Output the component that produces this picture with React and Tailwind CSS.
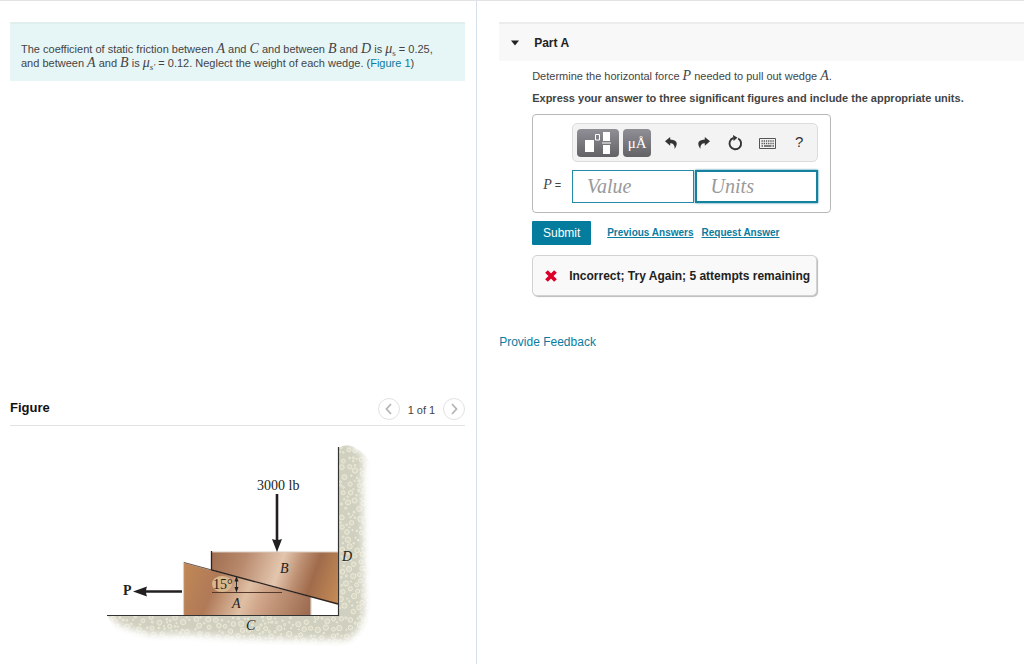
import React from "react";

const M = ({ children }) => (
  <i className="font-['Liberation_Serif',serif] text-[14px] leading-[0]">{children}</i>
);

const Sub = ({ children }) => (
  <span className="align-[-3px] font-['Liberation_Serif',serif] text-[9px] leading-[0]">{children}</span>
);

function makePebbles() {
  let seed = 11;
  const rand = () => {
    seed = (seed * 16807) % 2147483647;
    return seed / 2147483647;
  };
  const list = [];
  const add = (x0, y0, w, h, tries, min, max) => {
    for (let i = 0; i < tries; i++) {
      const r = min + rand() * (max - min);
      const x = x0 + rand() * w;
      const y = y0 + rand() * h;
      if (list.every((p) => Math.hypot(p.x - x, p.y - y) > p.r + r + 1.3)) list.push({ x, y, r });
    }
  };
  add(108, 617, 262, 30, 240, 1.9, 2.7);
  add(340, 445, 30, 172, 190, 1.9, 2.7);
  add(108, 617, 262, 30, 600, 0.6, 1.2);
  add(340, 445, 30, 172, 450, 0.6, 1.2);
  return list;
}
const pebbles = makePebbles();

function WedgeDiagram() {
  return (
    <svg viewBox="100 440 280 210" className="ml-[90px] block h-[210px] w-[280px] font-['Liberation_Serif',serif]" role="img" aria-label="Wedges A and B between floor C and wall D">
      <defs>
        <linearGradient id="wedgeA" gradientUnits="userSpaceOnUse" x1="183" y1="575" x2="305" y2="625">
          <stop offset="0" stopColor="#c08655" />
          <stop offset="0.25" stopColor="#b07a58" />
          <stop offset="0.5" stopColor="#dfbfa4" />
          <stop offset="0.62" stopColor="#cfa488" />
          <stop offset="1" stopColor="#9c6a4e" />
        </linearGradient>
        <linearGradient id="wedgeB" gradientUnits="userSpaceOnUse" x1="212" y1="550" x2="338" y2="595">
          <stop offset="0" stopColor="#a06d50" />
          <stop offset="0.25" stopColor="#b98a6d" />
          <stop offset="0.52" stopColor="#e3c6ae" />
          <stop offset="0.66" stopColor="#bd8f72" />
          <stop offset="0.78" stopColor="#a06b4b" />
          <stop offset="1" stopColor="#c38a55" />
        </linearGradient>
        <filter id="soft" x="-20%" y="-20%" width="140%" height="140%">
          <feGaussianBlur stdDeviation="3.5" />
        </filter>
        <mask id="fade" maskUnits="userSpaceOnUse" x="100" y="440" width="280" height="210">
          <path d="M100 610H334V436Q352 442 364 458L362 480L363 520L364 600Q366 630 346 640L250 638L190 634L150 634L122 626Z" fill="#fff" filter="url(#soft)" />
        </mask>
        <clipPath id="solid">
          <path d="M107 615H338V448Q348 442 357 449Q368 454 371 466L370 600Q372 644 340 646L120 642Z" />
        </clipPath>
      </defs>
      <g clipPath="url(#solid)">
        <g mask="url(#fade)">
          <rect x="100" y="440" width="280" height="210" fill="#d0d0c0" />
          {pebbles.map((p, i) => (
            <circle key={i} cx={p.x} cy={p.y} r={p.r} fill="#d8d6c4" stroke="#efecd9" strokeWidth="0.9" />
          ))}
        </g>
      </g>
      <path d="M107 615.5H338.500V447" fill="none" stroke="#333" strokeWidth="1.2" />
      <path d="M183 562.500L311 597V615H183Z" fill="url(#wedgeA)" />
      <path d="M183.500 615V562.500L311 596.500V615" fill="none" stroke="#d8d2ca" strokeWidth="1.2" />
      <path d="M212 552H338V604L212 570Z" fill="url(#wedgeB)" />
      <path d="M212 552H338" stroke="#d9c9bb" strokeWidth="1.2" />
      <path d="M211.500 551V570L338 604" fill="none" stroke="#2d2420" strokeWidth="1.3" />
      <path d="M184 562.500L211 569.800" stroke="#50372a" strokeWidth="0.8" />
      <ellipse cx="222" cy="584" rx="10" ry="8" fill="#d9b78c" />
      <path d="M212 592.500H282" stroke="#55392a" strokeWidth="1" />
      <path d="M236.500 579V591" stroke="#222" strokeWidth="0.9" />
      <path d="M236.500 576L238.500 581.500H234.500ZM236.500 592.500L238.500 587H234.500Z" fill="#222" />
      <path d="M277 494V543" stroke="#231f20" strokeWidth="2.6" />
      <path d="M277 552L272 539Q277 541 282 539Z" fill="#231f20" />
      <path d="M182 591.500H145" stroke="#231f20" strokeWidth="2.6" />
      <path d="M133 591.500L147 586.500Q145 591.500 147 596.500Z" fill="#231f20" />
      <g fill="#231f20" fontSize="14">
        <text x="257" y="490">3000 lb</text>
        <text x="123" y="595" fontWeight="bold">P</text>
        <text x="213" y="589">15°</text>
        <g fontStyle="italic">
          <text x="280" y="573">B</text>
          <text x="232" y="608">A</text>
          <text x="246" y="630">C</text>
          <text x="342" y="561">D</text>
        </g>
      </g>
    </svg>
  );
}

function ToolButton({ label, children }) {
  return (
    <button type="button" aria-label={label} className="flex h-7 w-8 items-center justify-center text-[#333]">
      {children}
    </button>
  );
}

const Undo = ({ flip }) => (
  <svg viewBox="0 0 13 12" className={flip ? "h-3 w-[13px] -scale-x-100" : "h-3 w-[13px]"} fill="currentColor">
    <path d="M5.200 0L0 4.300L5.200 8.700V6.200Q9.800 6 9.700 12Q15.400 3.200 5.200 2.500Z" />
  </svg>
);

function Pager({ label, d }) {
  return (
    <button type="button" aria-label={label} className="flex h-[22px] w-[22px] items-center justify-center rounded-full border border-[#e2e2e2] bg-white">
      <svg viewBox="0 0 10 12" className="h-3 w-[10px]" fill="none" stroke="#b5b5b5" strokeWidth="1.8">
        <path d={d} />
      </svg>
    </button>
  );
}

export default function App() {
  return (
    <div className="grid min-h-screen grid-cols-[46.6%_minmax(0,1fr)] border-t border-[#e3e3e3] bg-white font-['Liberation_Sans',Arial,sans-serif] text-[12px] text-[#444]">
      <section className="flex flex-col border-r border-[#d5dfee] pt-[21px] pr-[11px] pl-[10px]">
        <div className="border-t-2 border-[#e1eeee] bg-[#e6f6f7] px-[11px] pt-[18px] pb-[11px] text-[11px]">
          <p className="leading-[14px]">
            The coefficient of static friction between <M>A</M> and <M>C</M> and between <M>B</M> and <M>D</M> is <M>μ</M><Sub>s</Sub> = 0.25,
            <br />
            and between <M>A</M> and <M>B</M> is <M>μ</M><Sub><i>s′</i></Sub> = 0.12. Neglect the weight of each wedge. (
            <a href="#figure" className="text-[#0a7c9f]">Figure 1</a>)
          </p>
        </div>
        <div id="figure" className="mt-auto pb-[14px]">
          <div className="flex items-center justify-between border-b border-[#e2e2e2] pb-[5px]">
            <h2 className="pb-[2px] text-[13px] leading-5 font-bold text-[#111]">Figure</h2>
            <div className="flex items-center gap-2 text-[11px]">
              <Pager label="Previous figure" d="M7 1L2.500 6L7 11" />
              <span className="pt-[3px]">1 of 1</span>
              <Pager label="Next figure" d="M3 1L7.500 6L3 11" />
            </div>
          </div>
          <div className="pt-[14px]">
            <WedgeDiagram />
          </div>
        </div>
      </section>

      <main className="pt-[21px] pl-[22px]">
        <h2 className="flex h-[39px] items-center gap-[15px] border-t-2 border-[#ececec] bg-[#f8f8f8] pl-3 font-bold text-[#222]">
          <svg viewBox="0 0 8 6" className="h-[6px] w-2" fill="#222">
            <path d="M0 0.500H8L4 5.500Z" />
          </svg>
          Part A
        </h2>
        <div className="pl-[33px]">
          <p className="mt-[6px] text-[11px] leading-[18px]">
            Determine the horizontal force <M>P</M> needed to pull out wedge <M>A</M>.
          </p>
          <p className="mt-[5px] text-[11px] leading-[16px] font-bold">Express your answer to three significant figures and include the appropriate units.</p>

          <div className="mt-[8px] w-[299px] rounded-[4px] border border-[#b8b8b8] pt-2 pr-3 pb-[9px] pl-[10px]">
            <div className="ml-[29px] flex h-[39px] items-center rounded-[5px] border border-[#dcdcdc] bg-[#f3f3f3] pl-1">
              <button type="button" aria-label="Templates" className="mr-1 flex h-7 w-[42px] items-center justify-center rounded-[4px] bg-gradient-to-b from-[#8f8f96] to-[#636366]">
                <svg viewBox="0 0 26 22" className="h-[22px] w-[26px]">
                  <path d="M0 8H9V20H0ZM18 0H25V9H18ZM18 13H25V22H18ZM17 10.500H26V11.500H17Z" fill="#fff" />
                  <path d="M10.500 2.500H14.500V8H10.500Z" fill="none" stroke="#fff" />
                </svg>
              </button>
              <button type="button" aria-label="Units" className="mr-1 h-7 w-7 rounded-[4px] bg-gradient-to-b from-[#8f8f96] to-[#636366] font-['Liberation_Serif',serif] text-[15px] leading-7 text-white">μÅ</button>
              <ToolButton label="Undo"><Undo /></ToolButton>
              <ToolButton label="Redo"><Undo flip /></ToolButton>
              <ToolButton label="Reset">
                <svg viewBox="0 0 16 16" className="h-4 w-4" fill="none" stroke="currentColor" strokeWidth="1.900">
                  <path d="M11.200 3.500A5.800 5.800 0 1 1 6.500 3" />
                  <path d="M6 0L10.500 2.700L6.500 6Z" fill="currentColor" stroke="none" />
                </svg>
              </ToolButton>
              <ToolButton label="Keyboard">
                <svg viewBox="0 0 17 11" className="mt-[2px] h-[11px] w-[17px]" fill="none" stroke="#555">
                  <path d="M0.500 0.500H16.500V10.500H0.500Z" />
                  <path d="M2.500 3H15M2.500 5.500H15" strokeWidth="1.400" strokeDasharray="1.300 0.900" />
                  <path d="M2.500 8H4M5 8H12.500M13.500 8H15" strokeWidth="1.300" />
                </svg>
              </ToolButton>
              <ToolButton label="Help"><span className="text-[15px]">?</span></ToolButton>
            </div>
            <div className="mt-2 flex items-center">
              <label htmlFor="value" className="w-[29px] pb-[3px] text-[11px]"><M>P</M> =</label>
              <input id="value" placeholder="Value" className="h-[33px] w-[122px] min-w-0 border border-[#2789a8] pl-[14px] font-['Liberation_Serif',serif] text-[20px] italic outline-none placeholder:text-[#999]" />
              <input aria-label="Units" placeholder="Units" className="ml-px h-[33px] w-[124px] min-w-0 border-2 border-[#16809f] pl-[14px] font-['Liberation_Serif',serif] text-[20px] italic shadow-[0_0_2px_#16809f] outline-none placeholder:text-[#999]" />
            </div>
          </div>

          <div className="mt-2 flex items-center">
            <button type="button" className="h-6 w-[59px] rounded-[1px] bg-[#047c9d] text-[12px] text-white">Submit</button>
            <a href="#previous" className="ml-4 pb-[2px] text-[10px] font-bold text-[#0a7c9f] underline">Previous Answers</a>
            <a href="#request" className="ml-2 pb-[2px] text-[10px] font-bold text-[#0a7c9f] underline">Request Answer</a>
          </div>

          <div role="status" className="mt-[10px] flex h-[41px] w-[285px] items-center rounded-[5px] border border-[#d2d2d2] bg-[#f9f9f9] pl-3 text-[12px] font-bold text-[#222] shadow-[1px_1px_1px_#bbb]">
            <svg viewBox="0 0 12 12" className="mr-3 h-3 w-3" stroke="#dc0028" strokeWidth="3.800">
              <path d="M1.500 1.500L10.500 10.500M10.500 1.500L1.500 10.500" />
            </svg>
            Incorrect; Try Again; 5 attempts remaining
          </div>
        </div>
        <a href="#feedback" className="mt-[37px] inline-block text-[12px] leading-[18px] text-[#0a7c9f]">Provide Feedback</a>
      </main>
    </div>
  );
}
